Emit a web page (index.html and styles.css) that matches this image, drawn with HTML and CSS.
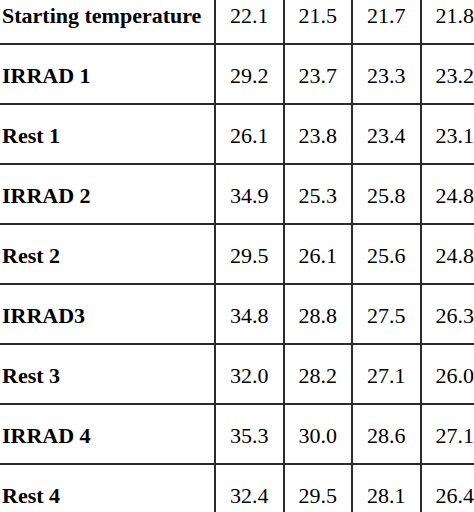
FILE: index.html
```html
<!DOCTYPE html>
<html>
<head>
<meta charset="utf-8">
<link rel="stylesheet" href="styles.css">
</head>
<body>
<table class="data">
  <colgroup>
    <col class="c-label">
    <col class="c-num">
    <col class="c-num">
    <col class="c-num">
    <col class="c-num">
  </colgroup>
  <tbody>
    <tr><th>Starting temperature</th><td>22.1</td><td>21.5</td><td>21.7</td><td>21.8</td></tr>
    <tr><th>IRRAD 1</th><td>29.2</td><td>23.7</td><td>23.3</td><td>23.2</td></tr>
    <tr><th>Rest 1</th><td>26.1</td><td>23.8</td><td>23.4</td><td>23.1</td></tr>
    <tr><th>IRRAD 2</th><td>34.9</td><td>25.3</td><td>25.8</td><td>24.8</td></tr>
    <tr><th>Rest 2</th><td>29.5</td><td>26.1</td><td>25.6</td><td>24.8</td></tr>
    <tr><th>IRRAD3</th><td>34.8</td><td>28.8</td><td>27.5</td><td>26.3</td></tr>
    <tr><th>Rest 3</th><td>32.0</td><td>28.2</td><td>27.1</td><td>26.0</td></tr>
    <tr><th>IRRAD 4</th><td>35.3</td><td>30.0</td><td>28.6</td><td>27.1</td></tr>
    <tr><th>Rest 4</th><td>32.4</td><td>29.5</td><td>28.1</td><td>26.4</td></tr>
  </tbody>
</table>
</body>
</html>
```
FILE: styles.css
```css
html, body {
  margin: 0;
  padding: 0;
  overflow: hidden;
  background: #ffffff;
}

.data {
  border-collapse: collapse;
  table-layout: fixed;
  width: 489px;
  margin-top: -17px;
  font-family: "Liberation Serif", "Times New Roman", serif;
  font-size: 22px;
  color: #000;
}

.c-label { width: 215px; }
.c-num { width: 68.5px; }

.data th,
.data td {
  height: 60px;
  box-sizing: border-box;
  padding: 4px 0 0 0;
  border: 2px solid #2b2b2b;
  vertical-align: middle;
  white-space: nowrap;
  overflow: hidden;
}

.data th {
  text-align: left;
  font-weight: bold;
  padding-left: 2px;
  border-left: none;
}

.data td {
  text-align: center;
  font-weight: normal;
}
```
